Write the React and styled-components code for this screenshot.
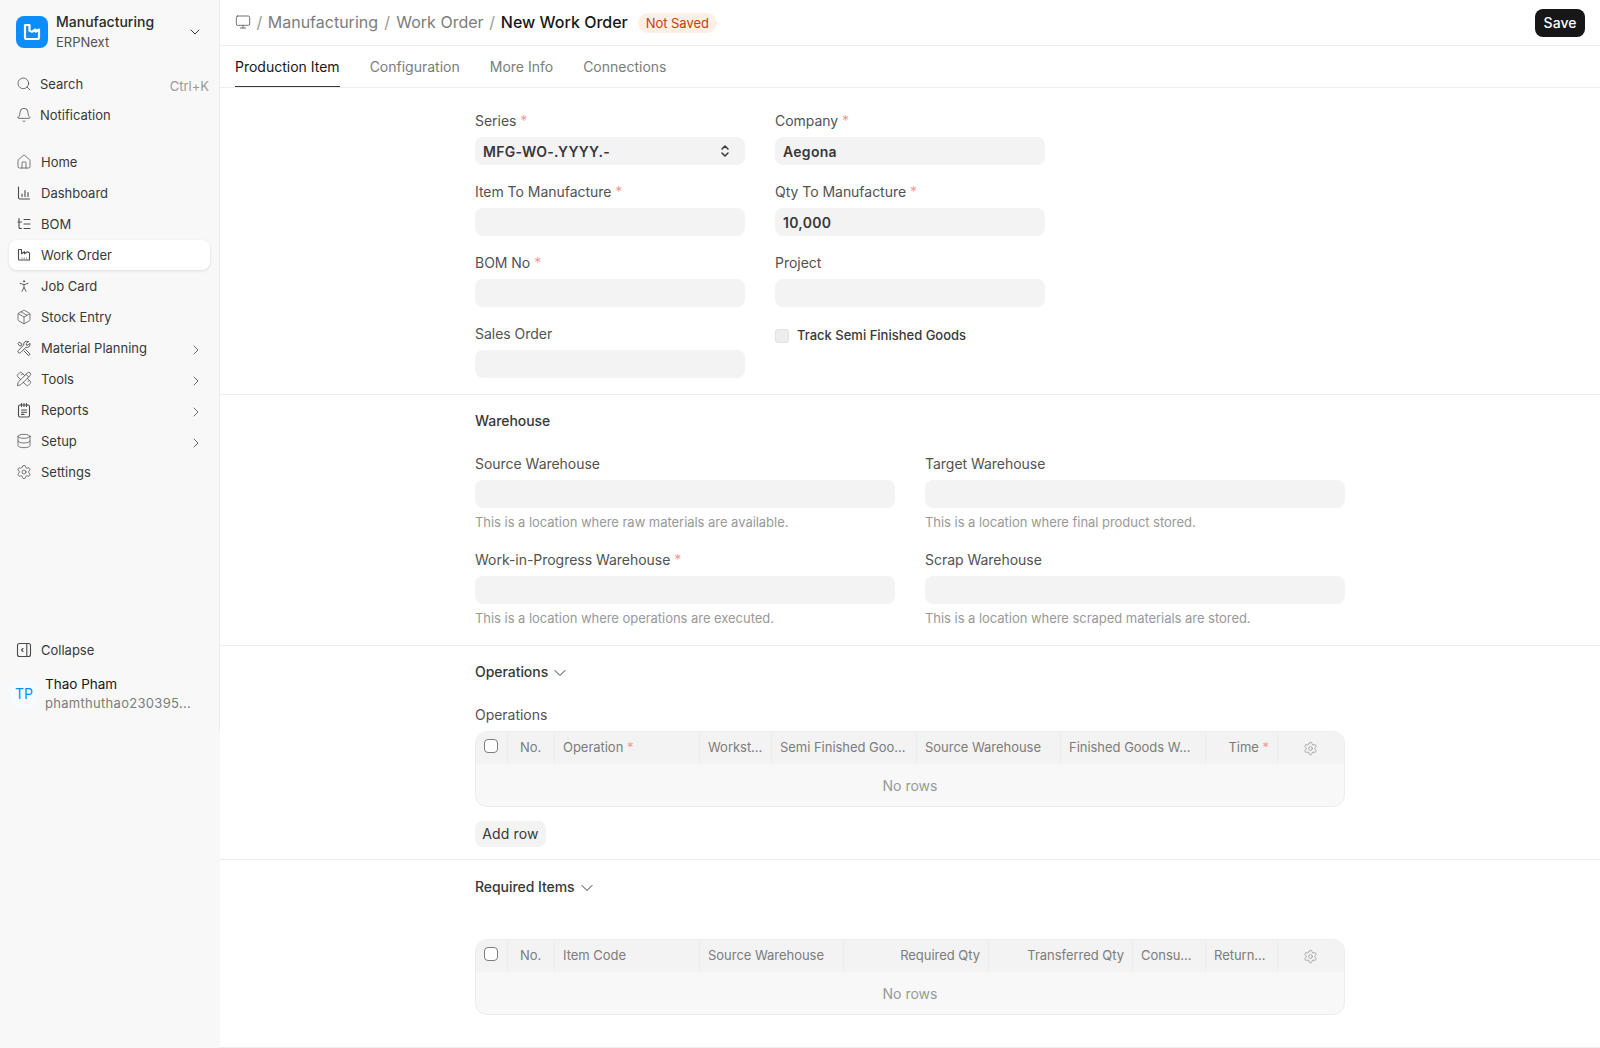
import React from 'react';
import styled, { createGlobalStyle } from 'styled-components';
import {
  Search, Bell, House, ChevronDown, ChevronRight, Monitor, PersonStanding,
  Package, PencilRuler, Settings, Database,
} from 'lucide-react';

const GlobalStyle = createGlobalStyle`
  html, body { margin: 0; padding: 0; background: #fff; }
  body { font-family: Inter, "Liberation Sans", sans-serif; color: #383838; font-size: 13px; }
  * { box-sizing: border-box; }
`;

const Page = styled.div`
  display: flex;
  width: 1600px;
  height: 1048px;
  overflow: hidden;
`;

const Sidebar = styled.aside`
  width: 220px;
  flex-shrink: 0;
  background: #f8f8f8;
`;

const SidebarInner = styled.div`
  height: 731px;
  display: flex;
  flex-direction: column;
  border-right: 1px solid #ededed;
`;

const AppSwitch = styled.div`
  display: flex;
  align-items: center;
  padding: 16px 16px 0;
  height: 48px;
  margin-bottom: 21px;
`;

const Logo = styled.div`
  width: 32px;
  height: 32px;
  border-radius: 8px;
  background: #0b8dfb;
  display: flex;
  align-items: center;
  justify-content: center;
  flex-shrink: 0;
`;

const AppText = styled.div`
  margin-left: 8px;
  flex: 1;
  display: flex;
  flex-direction: column;
  gap: 2px;
`;

const AppName = styled.div`
  font-size: 14px;
  font-weight: 500;
  line-height: 19px;
  color: #2b2b2b;
`;

const AppSub = styled.div`
  font-size: 13px;
  line-height: 19px;
  color: #525252;
`;

const NavGroup = styled.div`
  display: flex;
  flex-direction: column;
  gap: 1px;
  margin-bottom: ${(p) => p.$mb || 0}px;
`;

const NavItem = styled.div`
  display: flex;
  align-items: center;
  height: 30px;
  margin: 0 9px;
  padding: 0 ${(p) => (p.$tight ? 1 : 8)}px 0 7px;
  border-radius: 8px;
  font-size: 13px;
  color: #383838;
  background: ${(p) => (p.$active ? '#fff' : 'transparent')};
  box-shadow: ${(p) => (p.$active ? '0 1px 3px rgba(0,0,0,0.12)' : 'none')};
  svg { flex-shrink: 0; color: #4a4a4a; }
`;

const NavLabel = styled.span`
  margin-left: ${(p) => p.$ml || 9}px;
  flex: 1;
`;

const Shortcut = styled.span`
  color: #999;
  font-size: 13px;
  position: relative;
  top: 2px;
`;

const Caret = styled.span`
  display: flex;
  margin-right: -2px;
  position: relative;
  top: 2px;
`;

const SidebarBottom = styled.div`
  margin-top: auto;
  padding-bottom: 18px;
`;

const UserRow = styled.div`
  display: flex;
  align-items: center;
  margin-top: 10px;
  padding-left: 10px;
`;

const Avatar = styled.div`
  width: 28px;
  height: 28px;
  margin-bottom: 2px;
  border-radius: 50%;
  background: #f6fbff;
  color: #0b8dfb;
  font-size: 14px;
  display: flex;
  align-items: center;
  justify-content: center;
  flex-shrink: 0;
`;

const UserText = styled.div`
  margin-left: 7px;
`;

const UserName = styled.div`
  font-size: 13.5px;
  line-height: 18px;
  color: #171717;
`;

const UserMail = styled.div`
  margin-top: 1px;
  font-size: 13px;
  line-height: 19px;
  color: #7c7c7c;
  letter-spacing: 0.3px;
`;

const Main = styled.main`
  flex: 1;
  min-width: 0;
`;

const TopBar = styled.header`
  height: 46px;
  display: flex;
  align-items: center;
  padding: 0 15px;
  border-bottom: 1px solid #ededed;
`;

const Crumbs = styled.div`
  display: flex;
  align-items: center;
  font-size: 16px;
  color: #7c7c7c;
  position: relative;
  top: -1px;
  svg { color: #525252; }
`;

const Slash = styled.span`
  margin: 0 ${(p) => p.$m}px;
  color: #999;
`;

const CurrentCrumb = styled.span`
  color: #171717;
  font-weight: 500;
`;

const Badge = styled.span`
  margin-left: 10px;
  height: 20px;
  padding: 0 8px;
  border-radius: 10px;
  background: #fff0e6;
  color: #c2410c;
  font-size: 13px;
  line-height: 20px;
  letter-spacing: -0.05px;
`;

const SaveButton = styled.button`
  margin-left: auto;
  width: 50px;
  height: 28px;
  border: none;
  border-radius: 8px;
  background: #171717;
  color: #fff;
  font-family: inherit;
  font-size: 14px;
  font-weight: 500;
  padding: 0;
`;

const Tabs = styled.nav`
  height: 42px;
  display: flex;
  gap: 30px;
  padding: 0 15px;
  border-bottom: 1px solid #ededed;
`;

const Tab = styled.div`
  height: 41px;
  display: flex;
  align-items: center;
  font-size: 14px;
  color: ${(p) => (p.$active ? '#171717' : '#7c7c7c')};
  border-bottom: 1px solid ${(p) => (p.$active ? '#383838' : 'transparent')};
`;

const Section = styled.section`
  padding: ${(p) => p.$top}px 255px ${(p) => p.$bottom}px;
  border-bottom: 1px solid #ededed;
`;

const NarrowGrid = styled.div`
  display: grid;
  grid-template-columns: 270px 270px;
  column-gap: 30px;
  row-gap: 17px;
`;

const WideGrid = styled.div`
  display: grid;
  grid-template-columns: 420px 420px;
  column-gap: 30px;
  row-gap: 20px;
  margin-top: 23px;
`;

const Label = styled.div`
  font-size: 14px;
  line-height: 20px;
  color: #525252;
  margin-bottom: 6px;
  letter-spacing: -0.03px;
`;

const Star = styled.span`
  color: #ef9a9a;
`;

const Input = styled.input`
  display: block;
  width: 100%;
  height: 28px;
  border: none;
  outline: none;
  border-radius: 8px;
  background: #f3f3f3;
  padding: 0 8px;
  font-family: inherit;
  font-size: 14px;
  font-weight: 600;
  letter-spacing: 0.3px;
  color: #383838;
`;

const SelectBox = styled.div`
  display: flex;
  align-items: center;
  justify-content: space-between;
  height: 28px;
  border-radius: 8px;
  background: #f3f3f3;
  padding: 0 15px 0 8px;
  font-size: 14px;
  font-weight: 600;
  letter-spacing: 0.3px;
  color: #383838;
`;

const Help = styled.div`
  margin-top: 6px;
  font-size: 13px;
  line-height: 16px;
  color: #999;
  letter-spacing: -0.04px;
`;

const CheckRow = styled.label`
  display: flex;
  align-items: center;
  align-self: start;
  padding-top: 3px;
  font-size: 13px;
  font-weight: 450;
  color: #383838;
`;

const FakeCheck = styled.span`
  width: 14px;
  height: 14px;
  border-radius: 4px;
  background: #ededed;
  box-shadow: inset 0 0 0 1px #e2e2e2;
  margin-right: 8px;
  position: relative;
  top: 1px;
`;

const SectionTitle = styled.div`
  display: flex;
  align-items: center;
  gap: 2px;
  font-size: 14px;
  font-weight: 450;
  line-height: 20px;
  color: #383838;
  letter-spacing: -0.05px;
  margin-bottom: ${(p) => p.$mb || 0}px;
  svg { position: relative; top: 1px; color: #383838; }
`;

const Table = styled.div`
  border: 1px solid #ededed;
  border-radius: 12px;
  overflow: hidden;
  background: #f8f8f8;
`;

const HeadRow = styled.div`
  display: grid;
  grid-template-columns: ${(p) => p.$cols};
  height: 32px;
  background: #f3f3f3;
`;

const HeadCell = styled.div`
  display: flex;
  align-items: center;
  justify-content: ${(p) => (p.$right ? 'flex-end' : p.$center ? 'center' : 'flex-start')};
  padding: 0 ${(p) => (p.$center ? 9 : 8)}px 2px 8px;
  font-size: 13px;
  letter-spacing: -0.03px;
  color: #7c7c7c;
  white-space: nowrap;
  overflow: hidden;
  border-right: ${(p) => (p.$last ? 'none' : '1px solid #ededed')};
  svg { color: #8a8a8a; position: relative; top: 1px; }
`;

const TableCheck = styled.span`
  width: 14px;
  height: 14px;
  border-radius: 4px;
  border: 1px solid #7c7c7c;
  background: #fff;
  position: relative;
  top: -1px;
  left: -0.5px;
  flex-shrink: 0;
`;

const NoRows = styled.div`
  height: 42px;
  padding-top: 1px;
  display: flex;
  align-items: center;
  justify-content: center;
  font-size: 14px;
  color: #999;
`;

const AddRow = styled.button`
  display: block;
  margin-top: 14px;
  width: 71px;
  height: 26px;
  border: none;
  border-radius: 8px;
  background: #f3f3f3;
  font-family: inherit;
  font-size: 14px;
  letter-spacing: 0.15px;
  color: #383838;
  padding: 0 0 2px;
`;

const LogoIcon = () => (
  <svg width="20" height="20" viewBox="0 0 20 20" fill="none" stroke="#fff" strokeWidth="2.2" strokeLinejoin="round" strokeLinecap="round">
    <path d="M3 3v12.5c0 .8.7 1.5 1.5 1.5h11c.8 0 1.5-.7 1.5-1.5V7.5l-3.5 2.2V7.5l-3.5 2.2-2.5-1V3z" />
  </svg>
);

const icon = (children, weight = 1.1) => () => (
  <svg width="16" height="16" viewBox="0 0 16 16" fill="none" stroke="currentColor" strokeWidth={weight} strokeLinecap="round" strokeLinejoin="round">
    {children}
  </svg>
);

const DashboardIcon = icon(<path d="M2.5 2v10.5c0 .8.6 1.5 1.5 1.5h9.5M6 9v2.5M9 5.5v6M12 7.5v4" />);
const BomIcon = icon(<path d="M3 2.5v9c0 .6.4 1 1 1h1.5M2 6h3.5M8 3.5h6M8 8h6M8 12.5h6" />);
const WorkOrderIcon = icon(<path d="M2.5 2.5h3v4.2l3-2v2l3-2 2 1.2v7.1H3.5c-.6 0-1-.4-1-1V2.5zM6 11h.1M8.2 11h.1M10.4 11h.1" />);
const PlanningIcon = icon(
  <>
    <path d="M12.2 1.6 10.4 3.4v1.7h1.7l1.8-1.8a3 3 0 0 1-3.9 3.9L4.6 12.6a1.5 1.5 0 0 1-2.2-2.2L7.8 5a3 3 0 0 1 4.4-3.4z" />
    <path d="M2.2 3.2 3.2 2.2 5.6 3.6 5.9 5 5 5.9 3.6 5.6zM9.6 9.6l3.9 3.9a1 1 0 0 1-1.5 1.5L8.1 11.1" />
  </>,
  0.9
);
const ReportsIcon = icon(
  <>
    <rect x="2.5" y="3" width="11" height="12" rx="1.5" />
    <path d="M5.5 1.5v3M8 1.5v3M10.5 1.5v3M5.5 8h5M5.5 10.2h5M5.5 12.4h2.5" />
  </>
);
const CollapseIcon = icon(
  <>
    <rect x="1.5" y="1.5" width="13" height="13" rx="2" />
    <path d="M10.8 1.5v13M7 6.5 5.5 8 7 9.5" />
  </>
);
const UpDownIcon = () => (
  <svg width="10" height="14" viewBox="0 0 10 14" fill="none" stroke="#383838" strokeWidth="1.5" strokeLinecap="round" strokeLinejoin="round">
    <path d="M2 5 5 2l3 3M2 9l3 3 3-3" />
  </svg>
);

const navItems = [
  { label: 'Home', Icon: () => <House size={16} strokeWidth={1.1} /> },
  { label: 'Dashboard', Icon: DashboardIcon },
  { label: 'BOM', Icon: BomIcon },
  { label: 'Work Order', Icon: WorkOrderIcon, active: true },
  { label: 'Job Card', Icon: () => <PersonStanding size={16} strokeWidth={1.3} /> },
  { label: 'Stock Entry', Icon: () => <Package size={16} strokeWidth={1.1} /> },
  { label: 'Material Planning', Icon: PlanningIcon, caret: true },
  { label: 'Tools', Icon: () => <PencilRuler size={16} strokeWidth={1.2} />, caret: true },
  { label: 'Reports', Icon: ReportsIcon, caret: true },
  { label: 'Setup', Icon: () => <Database size={16} strokeWidth={1.1} />, caret: true },
  { label: 'Settings', Icon: () => <Settings size={16} strokeWidth={1.1} /> },
];

const opsCols = '32px 47px 145px 72px 145px 144px 145px 72px 1fr';
const opsHead = [
  { text: 'Operation', req: true },
  { text: 'Workst...' },
  { text: 'Semi Finished Goo...' },
  { text: 'Source Warehouse' },
  { text: 'Finished Goods W...' },
  { text: 'Time', req: true, right: true },
];
const itemCols = '32px 47px 145px 144px 145px 144px 73px 72px 1fr';
const itemHead = [
  { text: 'Item Code' },
  { text: 'Source Warehouse' },
  { text: 'Required Qty', right: true },
  { text: 'Transferred Qty', right: true },
  { text: 'Consu...' },
  { text: 'Return...' },
];

const Field = ({ label, required, value, help }) => (
  <div>
    <Label>
      {label} {required && <Star>*</Star>}
    </Label>
    <Input readOnly value={value || ''} />
    {help && <Help>{help}</Help>}
  </div>
);

const GridTable = ({ cols, head }) => (
  <Table>
    <HeadRow $cols={cols}>
      <HeadCell $center>
        <TableCheck />
      </HeadCell>
      <HeadCell $center>No.</HeadCell>
      {head.map((h) => (
        <HeadCell key={h.text} $right={h.right}>
          {h.text}
          {h.req && <Star>&nbsp;*</Star>}
        </HeadCell>
      ))}
      <HeadCell $center $last>
        <Settings size={15} strokeWidth={1.1} />
      </HeadCell>
    </HeadRow>
    <NoRows>No rows</NoRows>
  </Table>
);

export default function App() {
  return (
    <>
      <GlobalStyle />
      <Page>
        <Sidebar>
          <SidebarInner>
            <AppSwitch>
              <Logo>
                <LogoIcon />
              </Logo>
              <AppText>
                <AppName>Manufacturing</AppName>
                <AppSub>ERPNext</AppSub>
              </AppText>
              <ChevronDown size={16} strokeWidth={1.5} color="#383838" />
            </AppSwitch>
            <NavGroup $mb={17}>
              <NavItem $tight>
                <Search size={16} strokeWidth={1.2} />
                <NavLabel $ml={8}>Search</NavLabel>
                <Shortcut>Ctrl+K</Shortcut>
              </NavItem>
              <NavItem $tight>
                <Bell size={16} strokeWidth={1.2} />
                <NavLabel $ml={8}>Notification</NavLabel>
              </NavItem>
            </NavGroup>
            <NavGroup>
              {navItems.map(({ label, Icon, active, caret }) => (
                <NavItem key={label} $active={active}>
                  <Icon />
                  <NavLabel>{label}</NavLabel>
                  {caret && (
                    <Caret>
                      <ChevronRight size={16} strokeWidth={1.2} />
                    </Caret>
                  )}
                </NavItem>
              ))}
            </NavGroup>
            <SidebarBottom>
              <NavItem $tight>
                <CollapseIcon />
                <NavLabel>Collapse</NavLabel>
              </NavItem>
              <UserRow>
                <Avatar>TP</Avatar>
                <UserText>
                  <UserName>Thao Pham</UserName>
                  <UserMail>phamthuthao230395...</UserMail>
                </UserText>
              </UserRow>
            </SidebarBottom>
          </SidebarInner>
        </Sidebar>
        <Main>
          <TopBar>
            <Crumbs>
              <Monitor size={16} strokeWidth={1.2} />
              <Slash $m={5.5}>/</Slash>
              <span>Manufacturing</span>
              <Slash $m={6.25}>/</Slash>
              <span>Work Order</span>
              <Slash $m={5.75}>/</Slash>
              <CurrentCrumb>New Work Order</CurrentCrumb>
            </Crumbs>
            <Badge>Not Saved</Badge>
            <SaveButton>Save</SaveButton>
          </TopBar>
          <Tabs>
            <Tab $active>Production Item</Tab>
            <Tab>Configuration</Tab>
            <Tab>More Info</Tab>
            <Tab>Connections</Tab>
          </Tabs>
          <Section $top={23} $bottom={16}>
            <NarrowGrid>
              <div>
                <Label>
                  Series <Star>*</Star>
                </Label>
                <SelectBox>
                  MFG-WO-.YYYY.-
                  <UpDownIcon />
                </SelectBox>
              </div>
              <Field label="Company" required value="Aegona" />
              <Field label="Item To Manufacture" required />
              <Field label="Qty To Manufacture" required value="10,000" />
              <Field label="BOM No" required />
              <Field label="Project" />
              <Field label="Sales Order" />
              <CheckRow>
                <FakeCheck />
                Track Semi Finished Goods
              </CheckRow>
            </NarrowGrid>
          </Section>
          <Section $top={16} $bottom={19}>
            <SectionTitle>Warehouse</SectionTitle>
            <WideGrid>
              <Field label="Source Warehouse" help="This is a location where raw materials are available." />
              <Field label="Target Warehouse" help="This is a location where final product stored." />
              <Field label="Work-in-Progress Warehouse" required help="This is a location where operations are executed." />
              <Field label="Scrap Warehouse" help="This is a location where scraped materials are stored." />
            </WideGrid>
          </Section>
          <Section $top={16} $bottom={12}>
            <SectionTitle $mb={23}>
              Operations <ChevronDown size={20} strokeWidth={1.2} />
            </SectionTitle>
            <Label>Operations</Label>
            <GridTable cols={opsCols} head={opsHead} />
            <AddRow>Add row</AddRow>
          </Section>
          <Section $top={17} $bottom={32}>
            <SectionTitle $mb={42}>
              Required Items <ChevronDown size={20} strokeWidth={1.2} />
            </SectionTitle>
            <GridTable cols={itemCols} head={itemHead} />
          </Section>
        </Main>
      </Page>
    </>
  );
}
